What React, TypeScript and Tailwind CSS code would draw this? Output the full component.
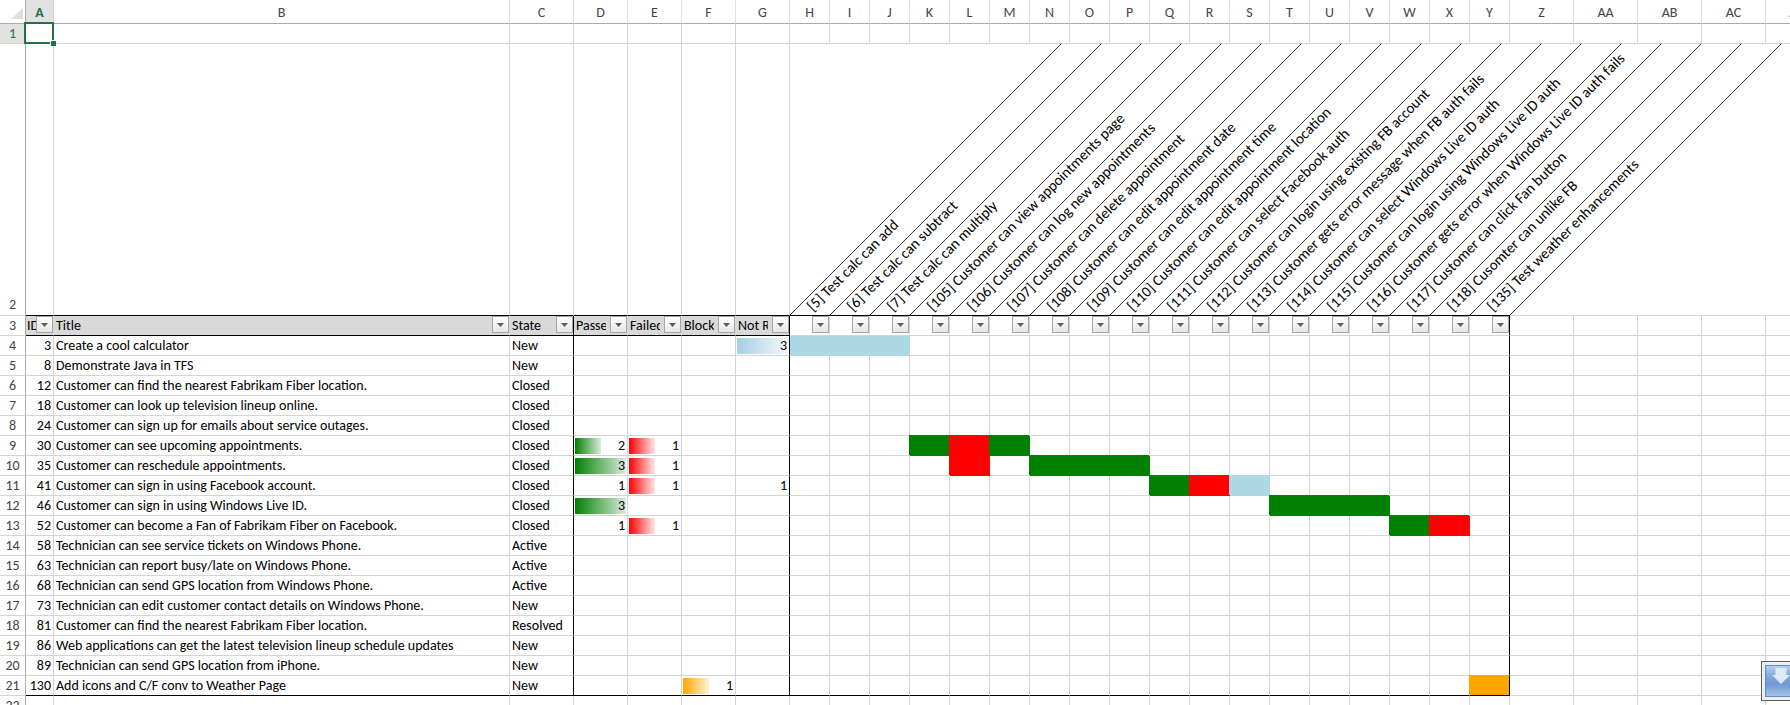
type Tone = 'green' | 'red' | 'blue' | 'orange'

const COLS = ['A', 'B', 'C', 'D', 'E', 'F', 'G', 'H', 'I', 'J', 'K', 'L', 'M', 'N', 'O', 'P', 'Q', 'R', 'S', 'T', 'U', 'V', 'W', 'X', 'Y', 'Z', 'AA', 'AB', 'AC', 'AD']
const TESTS = COLS.slice(7, 25)
const EXTRA = COLS.slice(25)

const ITEMS: [number, number, string, string][] = [
  [4, 3, 'Create a cool calculator', 'New'],
  [5, 8, 'Demonstrate Java in TFS', 'New'],
  [6, 12, 'Customer can find the nearest Fabrikam Fiber location.', 'Closed'],
  [7, 18, 'Customer can look up television lineup online.', 'Closed'],
  [8, 24, 'Customer can sign up for emails about service outages.', 'Closed'],
  [9, 30, 'Customer can see upcoming appointments.', 'Closed'],
  [10, 35, 'Customer can reschedule appointments.', 'Closed'],
  [11, 41, 'Customer can sign in using Facebook account.', 'Closed'],
  [12, 46, 'Customer can sign in using Windows Live ID.', 'Closed'],
  [13, 52, 'Customer can become a Fan of Fabrikam Fiber on Facebook.', 'Closed'],
  [14, 58, 'Technician can see service tickets on Windows Phone.', 'Active'],
  [15, 63, 'Technician can report busy/late on Windows Phone.', 'Active'],
  [16, 68, 'Technician can send GPS location from Windows Phone.', 'Active'],
  [17, 73, 'Technician can edit customer contact details on Windows Phone.', 'New'],
  [18, 81, 'Customer can find the nearest Fabrikam Fiber location.', 'Resolved'],
  [19, 86, 'Web applications can get the latest television lineup schedule updates', 'New'],
  [20, 89, 'Technician can send GPS location from iPhone.', 'New'],
  [21, 130, 'Add icons and C/F conv to Weather Page', 'New'],
]

// Passed / Failed / Blocked / Not Run : [value, bar width px, tone]
const COUNTS: Record<number, Record<string, [number, number, Tone]>> = {
  4: { G: [3, 50, 'blue'] },
  9: { D: [2, 26, 'green'], E: [1, 26, 'red'] },
  10: { D: [3, 51, 'green'], E: [1, 26, 'red'] },
  11: { D: [1, 0, 'green'], E: [1, 26, 'red'], G: [1, 0, 'blue'] },
  12: { D: [3, 51, 'green'] },
  13: { D: [1, 0, 'green'], E: [1, 26, 'red'] },
  21: { F: [1, 26, 'orange'] },
}

const FILLS: Record<number, Record<string, Tone>> = {
  4: { H: 'blue', I: 'blue', J: 'blue' },
  9: { K: 'green', L: 'red', M: 'green' },
  10: { L: 'red', N: 'green', O: 'green', P: 'green' },
  11: { Q: 'green', R: 'red', S: 'blue' },
  12: { T: 'green', U: 'green', V: 'green' },
  13: { W: 'green', X: 'red' },
  21: { Y: 'orange' },
}

const LABELS = [
  '[5] Test calc can add',
  '[6] Test calc can subtract',
  '[7] Test calc can multiply',
  '[105] Customer can view appointments page',
  '[106] Customer can log new appointments',
  '[107] Customer can delete appointment',
  '[108] Customer can edit appointment date',
  '[109] Customer can edit appointment time',
  '[110] Customer can edit appointment location',
  '[111] Customer can select Facebook auth',
  '[112] Customer can login using existing FB account',
  '[113] Customer gets error message when FB auth fails',
  '[114] Customer can select Windows Live ID auth',
  '[115] Customer can login using Windows Live ID auth',
  '[116] Customer gets error when Windows Live ID auth fails',
  '[117] Customer can click Fan button',
  '[118] Cusomter can unlike FB',
  '[135] Test weather enhancements',
]

const BAR: Record<Tone, string> = {
  green: 'bg-[linear-gradient(to_right,#008000,#dcecdc)]',
  red: 'bg-[linear-gradient(to_right,#ff0000,#ffe8e8)]',
  blue: 'bg-[linear-gradient(to_right,#a6cfe4,#f3f7fb)]',
  orange: 'bg-[linear-gradient(to_right,#ffa500,#fff1dc)]',
}

const FILL: Record<Tone, string> = {
  green: 'bg-[#008000] shadow-[-1px_-1px_0_0_#008000]',
  red: 'bg-[#ff0000] shadow-[-1px_-1px_0_0_#ff0000]',
  blue: 'bg-[#add8e6] shadow-[-1px_-1px_0_0_#add8e6]',
  orange: 'bg-[#ffa500] shadow-[-1px_-1px_0_0_#ffa500]',
}

const FILL_EDGE: Record<Tone, string> = {
  green: 'border-r-[#008000] border-b-[#008000]',
  red: 'border-r-[#ff0000] border-b-[#ff0000]',
  blue: 'border-r-[#add8e6] border-b-[#add8e6]',
  orange: 'border-r-[#ffa500] border-b-[#ffa500]',
}

const GRID = 'border-r border-b border-r-[#d4d4d4] border-b-[#d4d4d4]'

function edges(col: string, row: number) {
  const i = COLS.indexOf(col)
  const right = row >= 3 && row <= 21 && (col === 'C' || col === 'G' || col === 'Y') ? 'border-r-black' : 'border-r-[#d4d4d4]'
  const bottom = (row === 2 && i <= 6) || (row === 21 && i <= 24) ? 'border-b-black' : 'border-b-[#d4d4d4]'
  return `border-r border-b ${right} ${bottom}`
}

function DropBtn() {
  return (
    <div className="absolute right-0 top-0 w-[17px] h-[17px] border border-[#a6a6a6] bg-[linear-gradient(to_bottom,#ffffff,#e6e6e6)] flex items-center justify-center">
      <svg width="7" height="4" viewBox="0 0 7 4">
        <path d="M0 0h7L3.5 4z" fill="#5b5b5b" />
      </svg>
    </div>
  )
}

function ColHead({ c }: { c: string }) {
  if (c === 'A') {
    return (
      <div className="flex items-center justify-center pt-[2px] bg-[#e1e1e1] border-r border-r-[#d4d4d4] border-b-2 border-b-[#217346] text-[#217346] font-bold">
        A
      </div>
    )
  }
  return (
    <div className="flex items-center justify-center pt-[2px] border-r border-r-[#e1e1e1] border-b border-b-[#ababab] text-[#444]">
      {c}
    </div>
  )
}

function RowHead({ n, selected, tall }: { n: number; selected?: boolean; tall?: boolean }) {
  return (
    <div
      className={`flex justify-center leading-[20px] border-r border-r-[#ababab] border-b border-b-[#d4d4d4] ${tall ? 'items-end' : 'items-start'} ${
        selected ? 'bg-[#e1e1e1] text-[#217346]' : 'text-[#444]'
      }`}
    >
      {n}
    </div>
  )
}

function AngledHeaders() {
  return (
    <svg width="1040" height="272" viewBox="0 0 1040 272" className="block">
      {Array.from({ length: 19 }, (_, k) => (
        <line key={k} x1={40 * k - 0.5} y1={271.5} x2={40 * k - 0.5 + 271.5} y2={0} stroke="#000" strokeWidth={0.8} />
      ))}
      <line x1={0} y1={271.5} x2={720} y2={271.5} stroke="#000" strokeWidth={1} />
      <line x1={720} y1={271.5} x2={1040} y2={271.5} stroke="#d4d4d4" strokeWidth={1} />
      {LABELS.map((t, i) => {
        const x = 40 * i + 23
        const y = 268
        return (
          <text key={t} x={x} y={y} transform={`rotate(-45 ${x} ${y})`} fontSize={15} fontFamily="Carlito, Lato, sans-serif" fill="#000">
            {t}
          </text>
        )
      })}
    </svg>
  )
}

function HeadRow() {
  const gray = ['ID', 'Title', 'State', 'Passed', 'Failed', 'Blocked', 'Not Run']
  return (
    <>
      <RowHead n={3} />
      {gray.map((label, i) => (
        <div
          key={label}
          className={`relative whitespace-nowrap leading-[20px] bg-[#d9d9d9] border-r border-b border-b-black ${
            i === 2 || i === 6 ? 'border-r-black' : 'border-r-[#d9d9d9]'
          } ${i === 0 ? 'pl-[1px]' : 'pl-[2px]'}`}
        >
          <div className={`overflow-hidden ${i === 0 ? 'mr-[16px]' : 'mr-[21px]'}`}>{label}</div>
          <DropBtn />
        </div>
      ))}
      {TESTS.map((c) => (
        <div key={c} className={`relative border-r border-b border-b-[#d4d4d4] ${c === 'Y' ? 'border-r-black' : 'border-r-[#d4d4d4]'}`}>
          <DropBtn />
        </div>
      ))}
      {EXTRA.map((c) => (
        <div key={c} className={GRID} />
      ))}
    </>
  )
}

function DataRow({ item }: { item: [number, number, string, string] }) {
  const [n, id, title, state] = item
  const counts = COUNTS[n] || {}
  const fills = FILLS[n] || {}
  return (
    <>
      <RowHead n={n} />
      <div className={`${edges('A', n)} overflow-hidden whitespace-nowrap leading-[20px] text-right pr-[2px]`}>{id}</div>
      <div className={`${edges('B', n)} overflow-hidden whitespace-nowrap leading-[20px] pl-[2px]`}>{title}</div>
      <div className={`${edges('C', n)} overflow-hidden whitespace-nowrap leading-[20px] pl-[2px]`}>{state}</div>
      {['D', 'E', 'F', 'G'].map((c) => {
        const v = counts[c]
        return (
          <div key={c} className={`${edges(c, n)} overflow-hidden whitespace-nowrap`}>
            {v && (
              <div
                className={`mx-[1px] mt-[2px] h-[16px] leading-[16px] text-right pr-[1px] bg-no-repeat ${BAR[v[2]]}`}
                style={{ backgroundSize: `${v[1]}px 16px` }}
              >
                {v[0]}
              </div>
            )}
          </div>
        )
      })}
      {TESTS.map((c) => {
        const tone = fills[c]
        if (!tone) return <div key={c} className={edges(c, n)} />
        const edge =
          c === 'Y' && n === 21 ? 'border-r-black border-b-black' : FILL_EDGE[tone]
        const fill = c === 'H' ? 'bg-[#add8e6] shadow-[0_-1px_0_0_#add8e6]' : FILL[tone]
        return <div key={c} className={`border-r border-b ${edge} ${fill}`} />
      })}
      {EXTRA.map((c) => (
        <div key={c} className={GRID} />
      ))}
    </>
  )
}

function ScrollButton() {
  return (
    <div className="absolute left-[1761px] top-[661px] w-[40px] h-[40px] border border-[#5f5f5f] bg-[#eeeeee] p-[3px]">
      <div className="w-full h-full border border-[#5d8ccb] bg-[linear-gradient(to_bottom,#b9cfec_0%,#86acdc_30%,#6d98d2_60%,#a5c2e7_100%)] flex justify-center pt-[2px]">
        <svg width="18" height="16" viewBox="0 0 18 16">
          <path d="M3.5 0H14.5V7H18L9 16L0 7H3.5Z" fill="#dfe9f6" />
        </svg>
      </div>
    </div>
  )
}

export default function App() {
  return (
    <div className="relative w-[1790px] h-[705px] overflow-hidden bg-white font-['Carlito','Lato',sans-serif] text-[14px] text-black">
      <div className="grid grid-cols-[26px_28px_456px_64px_54px_54px_54px_54px_repeat(18,40px)_repeat(5,64px)] grid-rows-[24px_20px_272px_repeat(20,20px)]">
        {/* column letters */}
        <div className="flex items-end justify-end pr-[2px] pb-[4px] border-r border-b border-r-[#ababab] border-b-[#ababab]">
          <svg width="12" height="11" viewBox="0 0 12 11">
            <path d="M0 11H12V0Z" fill="#dfdfdf" />
          </svg>
        </div>
        {COLS.map((c) => (
          <ColHead key={c} c={c} />
        ))}

        {/* row 1 */}
        <RowHead n={1} selected />
        {COLS.map((c) =>
          c === 'A' ? (
            <div key={c} className={`relative ${GRID}`}>
              <div className="absolute -left-[2px] -top-[2px] w-[30px] h-[22px] border-2 border-[#217346]" />
              <div className="absolute left-[24px] top-[16px] w-[7px] h-[7px] bg-[#217346] border border-white" />
            </div>
          ) : (
            <div key={c} className={GRID} />
          )
        )}

        {/* row 2: angled test case headers */}
        <RowHead n={2} tall />
        {COLS.slice(0, 7).map((c) => (
          <div key={c} className={edges(c, 2)} />
        ))}
        <div className="col-span-23 overflow-hidden">
          <AngledHeaders />
        </div>

        {/* row 3: table header */}
        <HeadRow />

        {ITEMS.map((item) => (
          <DataRow key={item[0]} item={item} />
        ))}

        {/* row 22 */}
        <RowHead n={22} />
        {COLS.map((c) => (
          <div key={c} className={GRID} />
        ))}
      </div>
      <ScrollButton />
    </div>
  )
}
